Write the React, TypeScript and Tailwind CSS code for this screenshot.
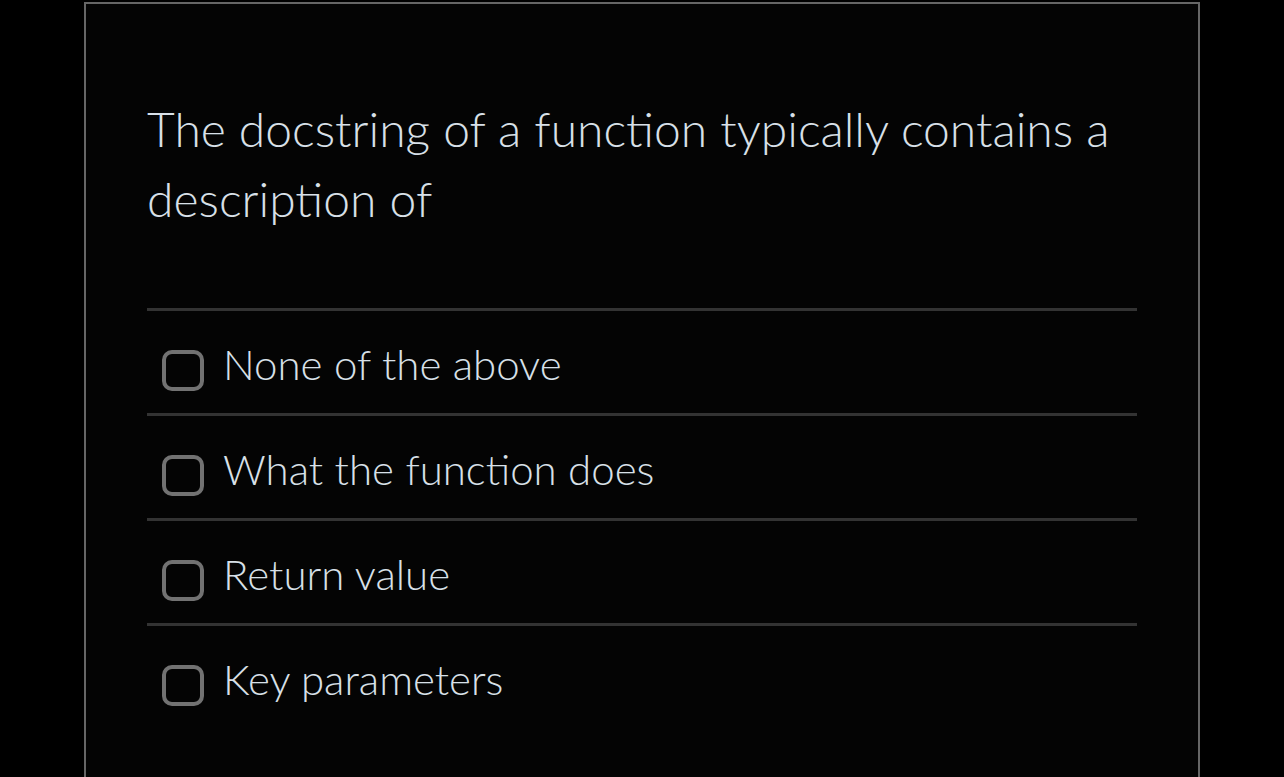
const options = ["None of the above", "What the function does", "Return value", "Key parameters"];

export default function App() {
  return (
    <div className="h-[777px] overflow-hidden bg-black font-['Lato_Light','Lato','Liberation_Sans',sans-serif]">
      <div className="ml-[84px] mt-[2px] w-[1116px] h-[800px] border-2 border-[#666666] bg-[#040404] px-[61px] pt-[90px]">
        <h1 className="text-[48px] leading-[70px] font-light text-[#d8e0e8]">
          The docstring of a function typically contains a description of
        </h1>
        <div className="mt-[74px]">
          {options.map((o) => (
            <div key={o} className="flex h-[105px] items-center border-t-[3px] border-[#333333]">
              <div className="ml-[15px] mt-[16px] h-[41px] w-[42px] rounded-[10px] border-[4px] border-[#727272]" />
              <span className="ml-[19px] mt-[4px] text-[42px] font-light text-[#d8e0e8]">{o}</span>
            </div>
          ))}
        </div>
      </div>
    </div>
  );
}
